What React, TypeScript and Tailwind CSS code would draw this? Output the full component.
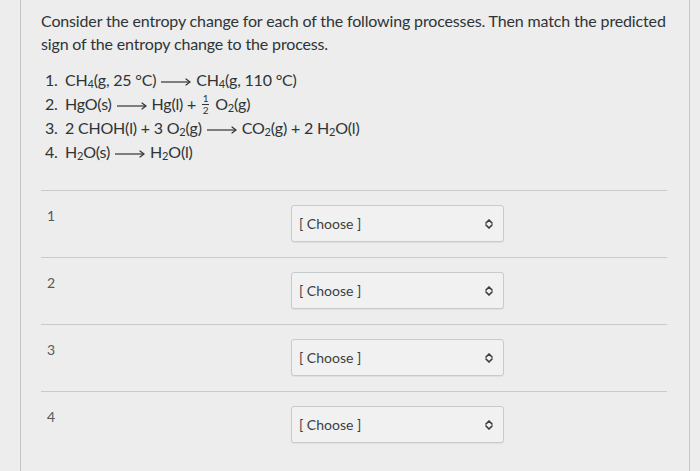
import { ReactNode } from "react";

const Sub = ({ children }: { children: ReactNode }) => (
  <sub className="text-[11px] relative top-[2px] align-baseline">{children}</sub>
);

const Arrow = () => (
  <svg width="30" height="10" viewBox="0 0 30 10" className="inline-block mx-[5px] align-middle" fill="none" stroke="#2f3437" strokeWidth="1.2">
    <path d="M0 5 H28.5" />
    <path d="M25 2 L29 5 L25 8" strokeLinecap="round" />
  </svg>
);

const Half = () => (
  <span className="inline-flex flex-col items-center align-middle text-[10px] leading-[9px] ml-[6px] mr-[6px] relative -top-[1px]">
    <span className="h-[9px]">1</span>
    <span className="w-[7px] border-t border-[#333] my-[1px]" />
    <span className="h-[9px]">2</span>
  </span>
);

const processes: ReactNode[] = [
  <>
    CH<Sub>4</Sub>(g, 25 °C)
    <Arrow />
    CH<Sub>4</Sub>(g, 110 °C)
  </>,
  <>
    HgO(s)
    <Arrow />
    Hg(l) +<Half />O<Sub>2</Sub>(g)
  </>,
  <>
    2 CHOH(l) + 3 O<Sub>2</Sub>(g)
    <Arrow />
    CO<Sub>2</Sub>(g) + 2 H<Sub>2</Sub>O(l)
  </>,
  <>
    H<Sub>2</Sub>O(s)
    <Arrow />
    H<Sub>2</Sub>O(l)
  </>,
];

function ChooseSelect() {
  return (
    <div className="w-[213px] h-[37px] border border-[#c7cbcb] rounded-[3px] bg-[#f0f1f0] flex items-center justify-between pl-[7px] pr-[9px] shadow-[0_1px_1px_rgba(0,0,0,0.06)]">
      <span className="text-[14px] text-[#3a3f42]">[ Choose ]</span>
      <svg width="10" height="12" viewBox="0 0 10 12" fill="none" stroke="#3a3f42" strokeWidth="1.7" strokeLinecap="round" strokeLinejoin="round">
        <path d="M2 5 L5 2 L8 5" />
        <path d="M2 7 L5 10 L8 7" />
      </svg>
    </div>
  );
}

export default function App() {
  return (
    <div className="w-[700px] h-[471px] overflow-hidden bg-[#ecedec] font-['Lato','Liberation_Sans',sans-serif] text-[#2f3437]">
      <div className="ml-[20px] w-[670px] h-full border-l border-r border-[#c4c6c5] pl-[20px] pr-[16px] pt-[9px]">
        <p className="text-[16px] leading-[23px] tracking-[-0.15px]">
          Consider the entropy change for each of the following processes. Then match the predicted sign of the
          entropy change to the process.
        </p>
        <ol className="mt-[13px] ml-[4px] text-[16px] leading-[24px] tracking-[-0.2px]">
          {processes.map((p, i) => (
            <li key={i} className="flex h-[24px] items-center">
              <span className="w-[20px]">{i + 1}.</span>
              <span className="whitespace-nowrap">{p}</span>
            </li>
          ))}
        </ol>
        <div className="mt-[26px] mr-[6px] border-t border-[#c9cbca]">
          {[1, 2, 3, 4].map((n) => (
            <div key={n} className="flex h-[67px] border-b border-[#c9cbca] last:border-b-0 pt-[12px]">
              <span className="w-[250px] pl-[6px] pt-[2px] text-[14px] text-[#555a5d]">{n}</span>
              <div className="pt-[2px]">
                <ChooseSelect />
              </div>
            </div>
          ))}
        </div>
      </div>
    </div>
  );
}
